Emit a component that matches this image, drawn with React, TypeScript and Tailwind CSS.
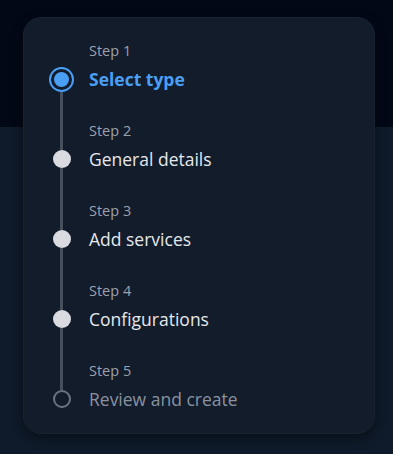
const steps = [
  { label: "Step 1", title: "Select type", state: "active" },
  { label: "Step 2", title: "General details", state: "done" },
  { label: "Step 3", title: "Add services", state: "done" },
  { label: "Step 4", title: "Configurations", state: "done" },
  { label: "Step 5", title: "Review and create", state: "pending" },
];

function Dot({ state }: { state: string }) {
  if (state === "active") {
    return (
      <div className="flex h-[25px] w-[25px] shrink-0 items-center justify-center rounded-full border-2 border-[#4a9ff5]">
        <div className="h-[15px] w-[15px] rounded-full bg-[#4a9ff5]" />
      </div>
    );
  }
  if (state === "done") {
    return <div className="h-[18px] w-[18px] shrink-0 rounded-full bg-[#d9dbe1]" />;
  }
  return <div className="h-[18px] w-[18px] shrink-0 rounded-full border-2 border-[#6b7382]" />;
}

export default function App() {
  return (
    <div
      className="min-h-screen bg-[linear-gradient(to_bottom,#020816_127px,#0f1a2a_127px)] pl-[23px] pt-[17px]"
      style={{ fontFamily: '"Open Sans", "Noto Sans", sans-serif' }}
    >
      <div className="w-[352px] rounded-[18px] border border-[#182231] bg-[#121c2b] pb-[20px] pl-[25px] pt-[23px] shadow-[0_4px_12px_rgba(0,0,0,0.45)]">
        {steps.map((s, i) => {
          const first = i === 0;
          const last = i === steps.length - 1;
          const line = "w-[3px] bg-[#464f5d]";
          return (
            <div key={s.label} className="flex gap-[15px]">
              <div className="flex w-[25px] flex-col items-center">
                <div className={`h-[24px] ${first ? "" : line}`} />
                <div className="flex h-[28px] flex-col items-center">
                  <div className={`flex-1 ${first ? "" : line}`} />
                  <Dot state={s.state} />
                  <div className={`flex-1 ${last ? "" : line}`} />
                </div>
                <div className={`flex-1 ${last ? "" : line}`} />
              </div>
              <div className={last ? "" : "pb-[28px]"}>
                <div className="h-[20px] text-[14.5px] leading-[20px] text-[#9aa1ad]">{s.label}</div>
                <div
                  className={`mt-[4px] text-[17.5px] leading-[28px] ${
                    s.state === "active"
                      ? "font-bold text-[#4a9ff5]"
                      : s.state === "done"
                      ? "text-[#e6e8ec]"
                      : "text-[#8a92a0]"
                  }`}
                >
                  {s.title}
                </div>
              </div>
            </div>
          );
        })}
      </div>
    </div>
  );
}
